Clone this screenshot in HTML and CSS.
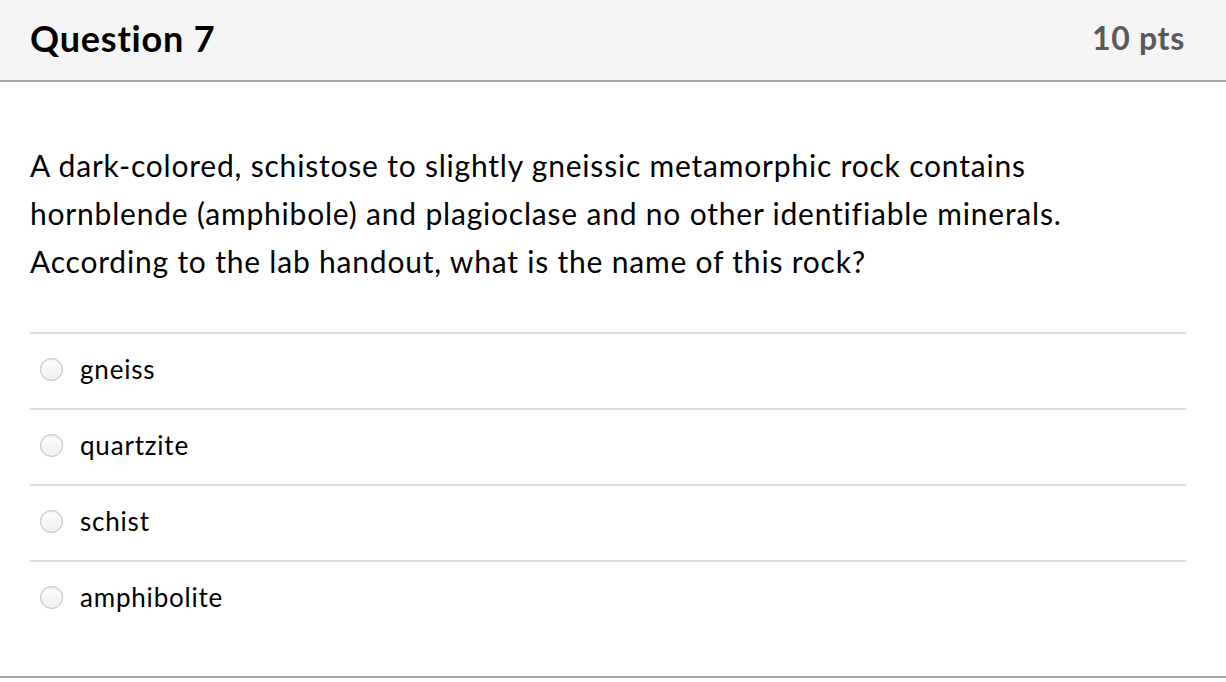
FILE: index.html
```html
<!DOCTYPE html>
<html lang="en">
<head>
<meta charset="utf-8">
<title>Question 7</title>
<link rel="stylesheet" href="styles.css">
</head>
<body>
<div class="question">
  <div class="q-header">
    <h2 class="q-title">Question 7</h2>
    <span class="q-points">10 pts</span>
  </div>
  <div class="q-body">
    <p class="q-text">A dark-colored, schistose to slightly gneissic metamorphic rock contains hornblende (amphibole) and plagioclase and no other identifiable minerals. According to the lab handout, what is the name of this rock?</p>
    <div class="answers">
      <label class="answer"><span class="radio"></span><span class="answer-text">gneiss</span></label>
      <label class="answer"><span class="radio"></span><span class="answer-text">quartzite</span></label>
      <label class="answer"><span class="radio"></span><span class="answer-text">schist</span></label>
      <label class="answer"><span class="radio"></span><span class="answer-text">amphibolite</span></label>
    </div>
  </div>
</div>
</body>
</html>
```
FILE: styles.css
```css
html, body {
  margin: 0;
  padding: 0;
  background: #fff;
}
body {
  font-family: Lato, "Open Sans", sans-serif;
  color: #000;
}
.question {
  width: 1226px;
  height: 678px;
  box-sizing: border-box;
  border-bottom: 2px solid #a5a5a5;
  display: flex;
  flex-direction: column;
}
.q-header {
  height: 82px;
  box-sizing: border-box;
  background: #f5f5f5;
  border-bottom: 2px solid #a5a5a5;
  display: flex;
  align-items: center;
  justify-content: space-between;
  padding: 0 41px 5px 30px;
}
.q-title {
  margin: 0;
  font-size: 36px;
  font-weight: 700;
  letter-spacing: 0.8px;
  color: #000;
}
.q-points {
  font-size: 32px;
  font-weight: 700;
  letter-spacing: 0.7px;
  color: #5a5a5a;
}
.q-body {
  padding: 0 40px 0 30px;
}
.q-text {
  margin: 59px 0 47px 0;
  font-size: 30px;
  letter-spacing: 0.8px;
  line-height: 48px;
}
.answers {
  display: flex;
  flex-direction: column;
}
.answer {
  display: flex;
  align-items: center;
  box-sizing: border-box;
  border-top: 2px solid #dcdcdc;
  padding: 0 0 4px 10px;
  height: 76px;
  font-size: 26px;
  letter-spacing: 0.8px;
}
.radio {
  width: 21px;
  height: 21px;
  border-radius: 50%;
  border: 1px solid #bdbdbd;
  background: linear-gradient(#fdfdfd, #efefef);
  box-shadow: inset 0 1px 1px rgba(0,0,0,0.08);
  margin-right: 17px;
  flex: none;
}
```
